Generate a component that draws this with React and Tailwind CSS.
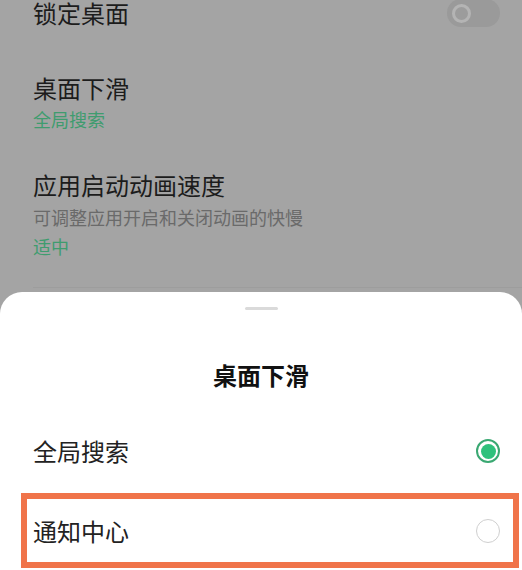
import React from 'react';

const font = { fontFamily: '"Noto Sans CJK SC", "Noto Sans", sans-serif' };

const Radio = ({ checked }) =>
  checked ? (
    <div className="w-6 h-6 rounded-full border-2 border-[#3aa872] flex items-center justify-center">
      <div className="w-[15px] h-[15px] rounded-full bg-[#2fc17c]" />
    </div>
  ) : (
    <div className="w-6 h-6 rounded-full border-[1.5px] border-[#cfcfcf]" />
  );

export default function App() {
  return (
    <div className="w-[522px] h-[570px] overflow-hidden flex flex-col bg-[#a4a4a4]" style={font}>
      {/* dimmed settings page */}
      <div className="h-[292px] shrink-0 flex flex-col">
        <div className="h-[26px] flex items-center justify-between pl-[33px] pr-[22px]">
          <span className="text-[24px] leading-[26px] text-[#1c1c1c]">锁定桌面</span>
          <div className="w-[53px] h-[28px] rounded-full bg-[#9a9a9a] flex items-center pl-[5px]">
            <div className="w-[19px] h-[19px] rounded-full border-[3px] border-[#b4b4b4] bg-[#9c9c9c]" />
          </div>
        </div>

        <div className="px-[33px] flex flex-col">
          <span className="mt-[47px] text-[24px] leading-[30px] text-[#1c1c1c]">桌面下滑</span>
          <span className="mt-[4px] text-[18px] leading-[24px] text-[#3f9c6f]">全局搜索</span>

          <span className="mt-[39px] text-[24px] leading-[30px] text-[#1c1c1c]">应用启动动画速度</span>
          <span className="mt-[5px] text-[18px] leading-[24px] text-[#6a6a6a]">可调整应用开启和关闭动画的快慢</span>
          <span className="mt-[5px] text-[18px] leading-[24px] text-[#3f9c6f]">适中</span>
        </div>
        <div className="mt-auto mb-[4px] ml-[33px] h-px bg-[#9d9d9d]" />
      </div>

      {/* bottom sheet */}
      <div className="flex-1 bg-white rounded-t-[22px] flex flex-col">
        <div className="mt-[15px] mx-auto w-[33px] h-[3px] rounded-full bg-[#dadada]" />
        <div className="mt-[50px] text-center text-[24px] leading-[30px] font-semibold text-[#111]">桌面下滑</div>

        <div className="mt-[31px] h-[60px] flex items-center justify-between pl-[33px] pr-[22px]">
          <span className="text-[24px] text-[#222]">全局搜索</span>
          <Radio checked />
        </div>

        <div className="mt-[12px] ml-[21px] mr-[3px] h-[75px] shrink-0 border-[6px] border-[#f0744a] flex items-center justify-between pl-[6px] pr-[13px]">
          <span className="text-[24px] text-[#222]">通知中心</span>
          <Radio />
        </div>
      </div>
    </div>
  );
}
